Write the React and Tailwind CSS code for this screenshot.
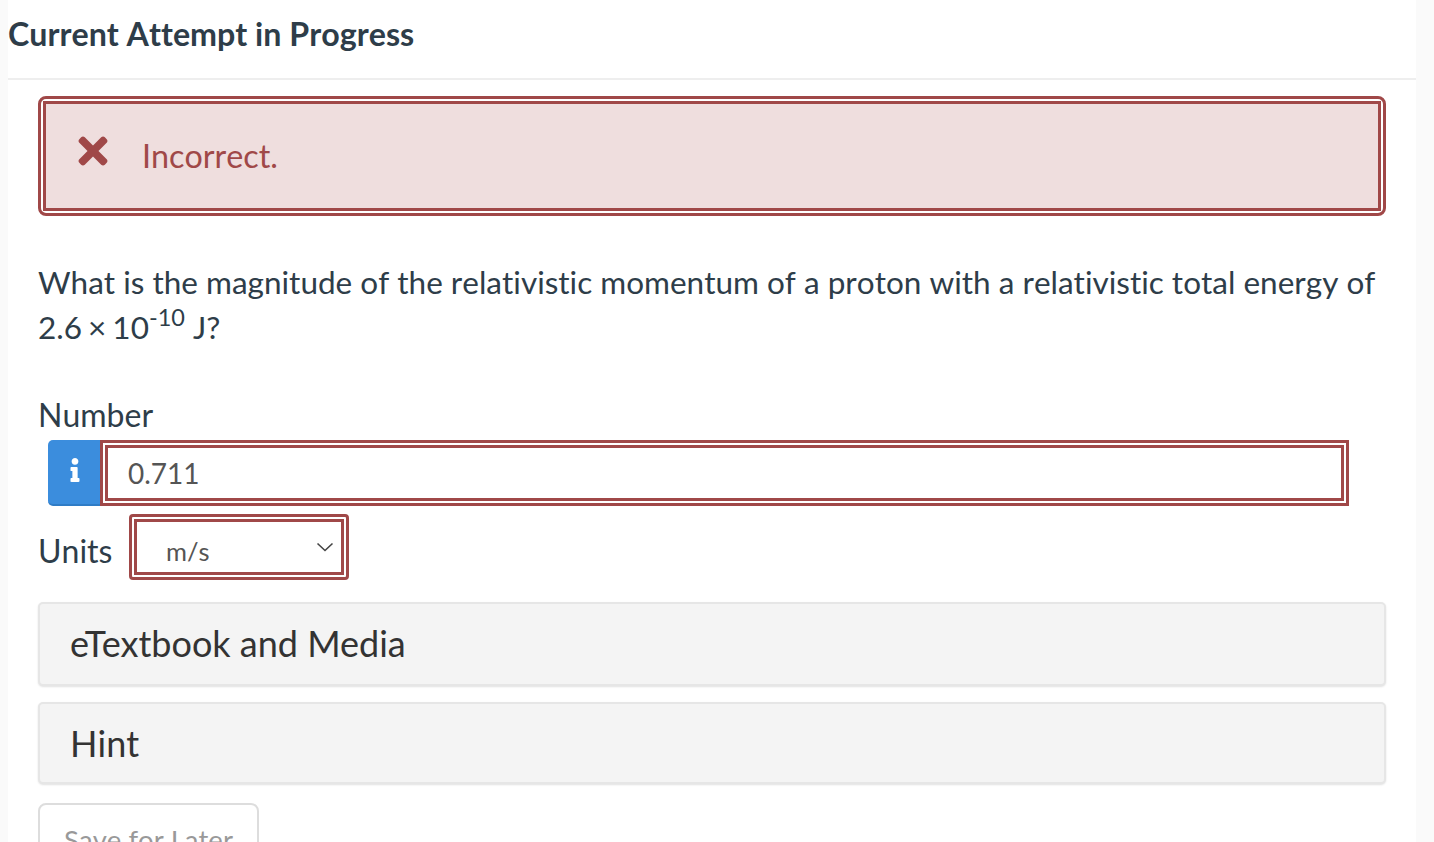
import { FaTimes, FaInfo } from "react-icons/fa"

function App() {
  return (
    <div className="h-[842px] overflow-hidden bg-[#fafafa] pl-2 pr-[18px] font-['Lato','Noto_Sans',sans-serif] text-[#2d3b45] [font-kerning:none] [font-variant-ligatures:none]">
      <div className="h-full bg-white">
        <header className="h-20 border-b-2 border-[#eeeeee] pt-[12px]">
          <h1 className="text-[32.2px] leading-[44px] font-bold text-[#2e3d49]">Current Attempt in Progress</h1>
        </header>

        <div className="px-[30px] pt-4">
          {/* alert */}
          <div className="h-[120px] rounded-lg border-[3px] border-[#a04848] p-[2px]">
            <div className="flex h-full items-center border-[3px] border-[#a04848] bg-[#efdede] pl-[32px] text-[#a04848]">
              <FaTimes className="mb-[10px] h-[42px] w-[30px]" />
              <span className="ml-[34px] text-[32.3px] leading-none">Incorrect.</span>
            </div>
          </div>

          <p className="mt-[44px] text-[31.5px] leading-[44px] text-[#2e3d49]">
            What is the magnitude of the relativistic momentum of a proton with a relativistic total energy of{" "}
            <span className="relative top-px [word-spacing:-2px]">2.6 × 10</span>
            <sup className="text-[23.5px] leading-none">-10</sup> <span className="relative top-px">J?</span>
          </p>

          <label className="mt-[45px] block text-[32px] leading-[44px] text-[#2e3d49]">Number</label>

          <div className="mt-[3px] ml-[10px] flex h-[66px] w-[1301px]">
            <div className="flex w-[52px] items-center justify-center rounded-l-[5px] border-b-2 border-[#2f7cc6] bg-[#3b8ddd] text-white">
              <FaInfo className="mb-1 ml-[2px] h-[24px] w-[14px]" />
            </div>
            <div className="flex-1 border-[3px] border-[#a04848] p-[2px]">
              <div className="flex h-full items-center border-[3px] border-[#a04848] bg-white pl-[20px] text-[28px] text-[#555555]">
                0.711
              </div>
            </div>
          </div>

          <div className="mt-[8px] flex items-center">
            <span className="mt-2 w-[91px] text-[32px] text-[#2e3d49]">Units</span>
            <div className="h-[66px] w-[220px] rounded-[4px] border-[3px] border-[#a04848] p-[2px]">
              <div className="flex h-full items-center justify-between border-[3px] border-[#a04848] bg-white pl-[29px] pr-[7px] text-[25.5px] text-[#555555]">
                <span className="mt-2">m/s</span>
                <svg viewBox="0 0 18 10" className="h-[10px] w-[18px]" fill="none" stroke="#444444" strokeWidth="1.6">
                  <path d="M1.5 1.5 9 8.5l7.5-7" />
                </svg>
              </div>
            </div>
          </div>

          <div className="mt-[22px] flex h-[84px] items-center rounded-[5px] border-2 border-[#e6e6e6] bg-[#f4f4f4] pb-[2px] pl-[30px] text-[36px] text-[#333333] shadow-[0_1px_2px_rgba(0,0,0,0.12)] [font-kerning:normal]">
            eTextbook and Media
          </div>
          <div className="mt-4 flex h-[82px] items-center rounded-[5px] border-2 border-[#e6e6e6] bg-[#f4f4f4] pl-[30px] text-[36px] text-[#333333] shadow-[0_1px_2px_rgba(0,0,0,0.12)]">
            Hint
          </div>

          <button className="mt-[19px] h-[74px] w-[221px] rounded-lg border-2 border-[#dddddd] bg-white text-[27.5px] text-[#999999]">
            Save for Later
          </button>
        </div>
      </div>
    </div>
  )
}

export default App
